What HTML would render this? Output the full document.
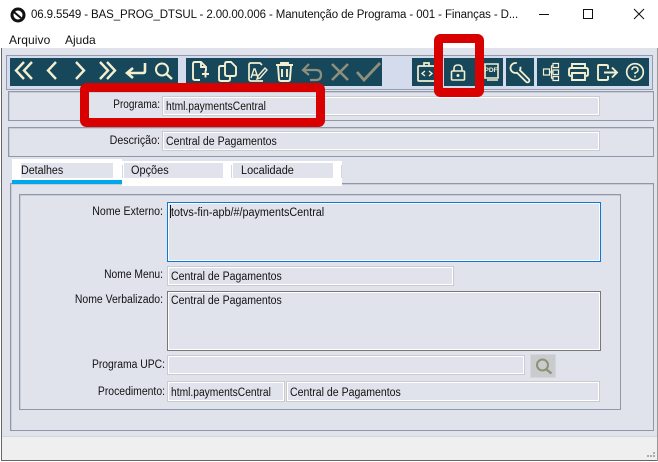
<!DOCTYPE html>
<html><head><meta charset="utf-8">
<style>
html,body{margin:0;padding:0}
body{width:658px;height:462px;overflow:hidden;background:#fff;position:relative;font-family:"Liberation Sans",sans-serif;font-size:11.5px;color:#111}
div{position:absolute;box-sizing:border-box}
.p{border:1px solid #8f98a8;box-shadow:inset 1px 1px 0 #c8ccd6;background:#e0e3ec}
.f{background:#e0e3ec;border:1px solid #c9cbcf;box-shadow:inset 0 0 0 1px #fff;padding:3px 0 0 3px;white-space:nowrap;font-size:11.5px;line-height:14px}
.f span,.t span{display:inline-block;transform-origin:0 50%}
.l{text-align:right;font-size:11.5px;line-height:14px;white-space:nowrap;transform-origin:100% 50%}
.d{background:#16475b;top:58px;height:28px}
.t{background:#e0e3ec;top:163px;height:15px;line-height:16px;font-size:11.5px}
svg{position:absolute;left:0;top:0}
</style></head><body>
<div style="left:0;top:0;width:658px;height:48px;background:#fff"></div>
<svg width="24" height="24" style="left:7px;top:4px"><circle cx="11" cy="11" r="6" fill="none" stroke="#111" stroke-width="3"/><path d="M7 8l7 6" stroke="#111" stroke-width="2"/></svg>
<div style="left:31px;top:8px;white-space:nowrap;font-size:11.5px;line-height:14px;letter-spacing:-.11px">06.9.5549 - BAS_PROG_DTSUL - 2.00.00.006 - Manutenção de Programa - 001 - Finanças - D...</div>
<svg width="658" height="30"><path d="M539 14.500h10" stroke="#111"/><rect x="583.500" y="9.500" width="9" height="9" fill="none" stroke="#111"/><path d="M634 9l10 10M644 9l-10 10" stroke="#111"/></svg>
<div style="left:9px;top:33px;font-size:12px;line-height:14px;letter-spacing:.1px">Arquivo</div>
<div style="left:65px;top:33px;font-size:12px;line-height:14px">Ajuda</div>

<div style="left:2px;top:48px;width:655px;height:388px;background:#e0e3ec"></div>
<div style="left:1px;top:48px;width:1px;height:413px;background:#666"></div>
<div style="left:657px;top:48px;width:1px;height:413px;background:#999"></div>
<div style="left:1px;top:460px;width:656px;height:1px;background:#666"></div>
<div style="left:2px;top:436px;width:655px;height:24px;background:#efefef;border-top:1px solid #d4d6dc"></div>

<!-- toolbar -->
<div style="left:6px;top:55px;width:647px;height:35px;background:#d3dbec;border:1px solid #939cab"></div>
<div class="d" style="left:10px;width:168px"></div>
<div class="d" style="left:186px;width:196px"></div>
<div class="d" style="left:412px;width:28px"></div>
<div class="d" style="left:444px;width:28px"></div>
<div class="d" style="left:472px;width:31px"></div>
<div class="d" style="left:506px;width:28px"></div>
<div class="d" style="left:537px;width:112px"></div>

<svg width="658" height="100" fill="none" stroke="#f3efcf" stroke-width="2">
<path d="M24 62l-8 8.500 8 8.500M32 62l-8 8.500 8 8.500" stroke-width="2.400"/>
<path d="M56 62l-8 8.500 8 8.500" stroke-width="2.400"/>
<path d="M76 62l8 8.500-8 8.500" stroke-width="2.400"/>
<path d="M100 62l8 8.500-8 8.500M107 62l8 8.500-8 8.500" stroke-width="2.400"/>
<path d="M145 63v8q0 2-2 2h-16M133 68l-6 5 6 5" stroke-width="2.600"/>
<circle cx="162" cy="69.500" r="6"/><path d="M166.500 74l5.500 5" stroke-width="2.400"/>
<!-- new doc -->
<path d="M200 80h-5q-2 0-2-2V64q0-2 2-2h6l5 5v4M201 62v5h5M202 74h7M205.500 70.500v7" stroke-width="1.900"/>
<!-- copy -->
<path d="M225 66h-4q-2 0-2 2v11q0 2 2 2h7q2 0 2-2v-3M225 64q0-2 2-2h4l5 5v7q0 2-2 2h-7q-2 0-2-2z" stroke-width="1.900"/>
<!-- edit -->
<path d="M262 65l-2-2h-9q-2 0-2 2v14q0 2 2 2h12" stroke-width="1.700"/>
<path d="M251 78l3-9h1l3 9M252.500 75h5M258 76l7-8 2 2-7 8-3 1z" stroke-width="1.400"/>
<!-- trash -->
<path d="M276 65h17M281 65v-2h7v2M278 66l1 13q0 2 2 2h7q2 0 2-2l1-13M282 69v8M287 69v8" stroke-width="1.900"/>
<g stroke="#8f8f7d"><path d="M304 70h12q5 0 5 5t-5 5h-6M309 64l-6 6 6 5" stroke-width="2.200"/>
<path d="M332 64l16 16M348 64l-16 16" stroke-width="2.600"/>
<path d="M357 72l7 8 16-17" stroke-width="2.800"/></g>
<!-- code -->
<path d="M419 66h15q1 0 1 1v13q0 1-1 1h-15q-1 0-1-1v-13q0-1 1-1zM424 66v-3h5v3" stroke-width="1.700"/>
<path d="M425 71l-3 2.500 3 2.500M429 71l3 2.500-3 2.500" stroke-width="1.400"/>
<!-- lock -->
<rect x="451.500" y="71" width="13" height="9" rx="1" stroke-width="1.600"/><path d="M454 71v-2.500q0-3.500 4-3.500t4 3.500v2.500" stroke-width="1.600"/><circle cx="458" cy="75.500" r="1" fill="#f3efcf" stroke-width="1"/>
<!-- pdf -->
<path d="M485 64h13v14h-13zM487 80h11" stroke-width="1.600"/>
<!-- wrench -->
<path d="M516.500 69.500l11 11" stroke-width="5.500" stroke-linecap="round"/>
<circle cx="515.500" cy="68" r="5" fill="#16475b" stroke-width="1.800"/>
<path d="M516.500 69.500l11 11" stroke="#16475b" stroke-width="2" stroke-linecap="round"/>
<path d="M515 67.500l3-7h6l-2 6z" fill="#16475b" stroke="none"/>
<!-- hierarchy -->
<path d="M543.500 69h6v6h-6zM553 63.500h5.500v4h-5.500zM553 70h5.500v4.500h-5.500zM553 76.500h5.500v4h-5.500zM549.500 72h2M551.500 65.500v13M551.500 65.500h1.500M551.500 72h1.500M551.500 78.500h1.500" stroke-width="1.200"/>
<!-- printer -->
<path d="M571 76q-2 0-2-2v-4q0-2 2-2h15q2 0 2 2v4q0 2-2 2M572 68v-4h13v4M572 73h13v7h-13z" stroke-width="1.900"/>
<!-- exit -->
<path d="M608 76v3q0 1-2 1h-7q-1 0-1-1v-13q0-1 1-1h7q2 0 2 1v3M604 72.500h13M612 67.500l5 5-5 5" stroke-width="1.900"/>
<!-- help -->
<circle cx="635" cy="72" r="8.300" stroke-width="1.700"/><path d="M632 70q0-3 3-3t3 3q0 2-3 3v1" stroke-width="1.500"/><path d="M635 75.500v2" stroke-width="1.500"/>
</svg>
<div style="left:483px;top:66px;width:16px;height:10px;color:#f3efcf;font-size:6.5px;font-weight:bold;line-height:10px;text-align:center">PDF</div>

<!-- top panels -->
<div class="p" style="left:8px;top:91px;width:646px;height:30px"></div>
<div class="l" style="left:60px;top:98px;width:100px;transform:scaleX(.87)">Programa:</div>
<div class="f" style="left:162px;top:96px;width:438px;height:20px"><span style="transform:scaleX(.893)">html.paymentsCentral</span></div>
<div class="p" style="left:8px;top:127px;width:646px;height:30px"></div>
<div class="l" style="left:60px;top:134px;width:100px;transform:scaleX(.927)">Descrição:</div>
<div class="f" style="left:162px;top:131px;width:438px;height:20px"><span style="transform:scaleX(.917)">Central de Pagamentos</span></div>

<!-- main panels -->
<div class="p" style="left:10px;top:183px;width:644px;height:248px"></div>
<div style="left:19px;top:194px;width:602px;height:216px;border:1px solid #8f98a8;box-shadow:inset 1px 1px 0 #c8ccd6"></div>

<!-- tabs -->
<div style="left:12px;top:159px;width:110px;height:25px;background:#fff"></div>
<div style="left:12px;top:180px;width:110px;height:4px;background:#00a7ea"></div>
<div style="left:122px;top:161px;width:220px;height:25px;background:#fff"></div>
<div class="t" style="left:21px;width:92px"><span style="transform:scaleX(.93)">Detalhes</span></div>
<div class="t" style="left:124px;width:99px;padding-left:7px"><span style="transform:scaleX(.95)">Opções</span></div>
<div class="t" style="left:233px;width:100px;padding-left:8px"><span style="transform:scaleX(.95)">Localidade</span></div>
<div style="left:231px;top:165px;width:1px;height:13px;background:#d5d7dd"></div>
<div style="left:122px;top:165px;width:1px;height:13px;background:#d5d7dd"></div>
<div style="left:341px;top:165px;width:1px;height:13px;background:#d5d7dd"></div>

<!-- fields -->
<div class="l" style="left:40px;top:205px;width:123px;transform:scaleX(.922)">Nome Externo:</div>
<div class="f" style="left:167px;top:202px;width:434px;height:60px;border:1px solid #0a78d7;padding-top:3px"><span style="transform:scaleX(.94)">totvs-fin-apb/#/paymentsCentral</span></div>
<div style="left:170px;top:205px;width:1px;height:13px;background:#111"></div>
<div class="l" style="left:40px;top:268px;width:123px;transform:scaleX(.894)">Nome Menu:</div>
<div class="f" style="left:167px;top:266px;width:287px;height:20px"><span style="transform:scaleX(.917)">Central de Pagamentos</span></div>
<div class="l" style="left:40px;top:293px;width:123px;transform:scaleX(.907)">Nome Verbalizado:</div>
<div class="f" style="left:167px;top:291px;width:434px;height:60px;border:1px solid #777;padding-top:2px"><span style="transform:scaleX(.917)">Central de Pagamentos</span></div>
<div class="l" style="left:40px;top:358px;width:125px;transform:scaleX(.9)">Programa UPC:</div>
<div class="f" style="left:167px;top:355px;width:358px;height:20px"></div>
<div style="left:530px;top:354px;width:26px;height:24px;background:#c9cbcc;border:1px solid #d4d6d9"></div>
<svg width="658" height="462" fill="none" stroke="#8f9078"><circle cx="542.500" cy="365" r="5.500" stroke-width="2"/><path d="M546.500 369.500l5 4" stroke-width="2.400"/></svg>
<div class="l" style="left:40px;top:385px;width:125px;transform:scaleX(.905)">Procedimento:</div>
<div class="f" style="left:167px;top:381px;width:118px;height:21px;padding-top:4px"><span style="transform:scaleX(.893)">html.paymentsCentral</span></div>
<div class="f" style="left:286px;top:381px;width:314px;height:21px;padding-top:4px"><span style="transform:scaleX(.917)">Central de Pagamentos</span></div>
<svg width="658" height="462"><g fill="#a9abb0"><rect x="653" y="452" width="2" height="2"/><rect x="650" y="455" width="2" height="2"/><rect x="653" y="455" width="2" height="2"/><rect x="647" y="455" width="2" height="2"/></g></svg>

<!-- red annotations -->
<svg width="658" height="462"><rect x="84.500" y="87.500" width="236" height="35" rx="2" fill="none" stroke="#d90000" stroke-width="9"/>
<rect x="438.500" y="38.500" width="41" height="54" rx="2" fill="none" stroke="#d90000" stroke-width="9"/></svg>
</body></html>
